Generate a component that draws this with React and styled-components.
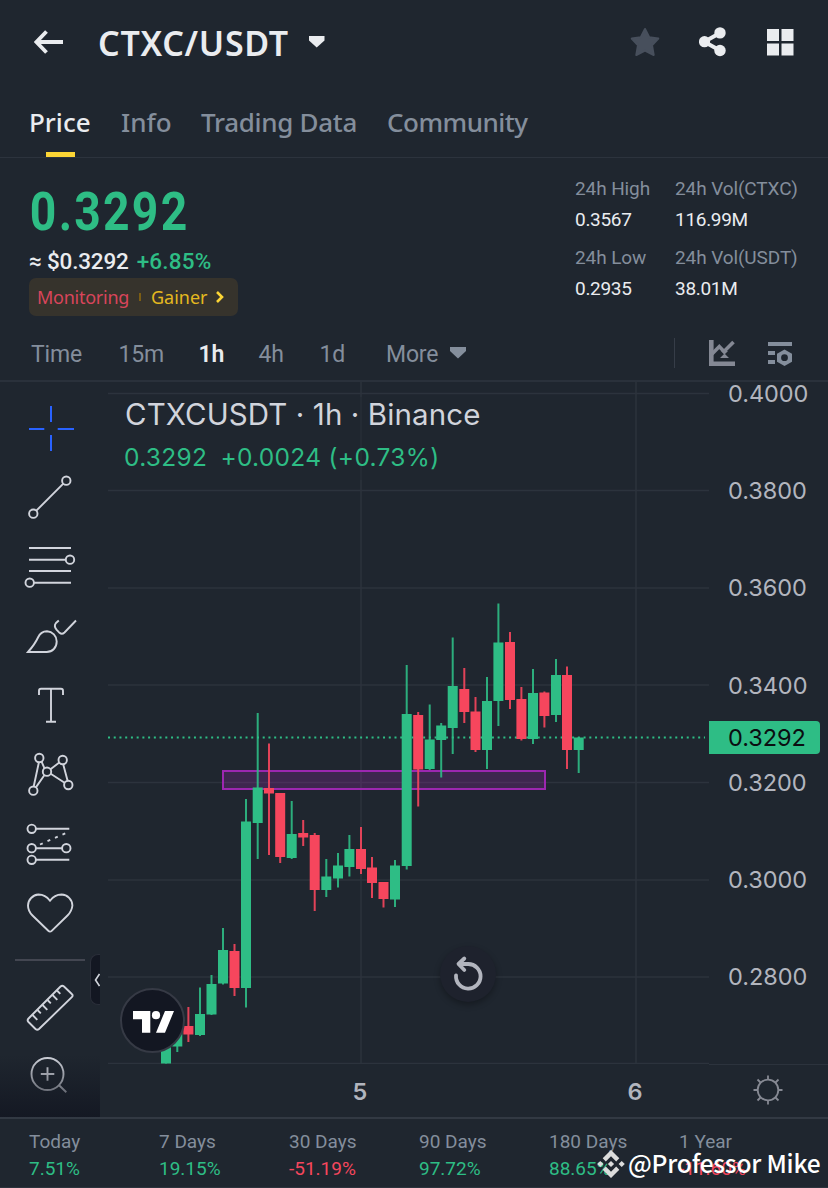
import React from 'react';
import styled, { createGlobalStyle } from 'styled-components';

const GREEN = '#2ebd85';
const RED = '#f6465d';

const GlobalStyle = createGlobalStyle`
  * { box-sizing: border-box; }
  body {
    margin: 0;
    background: #1f262f;
    color: #eaecef;
    font-family: Roboto, "Noto Sans", sans-serif;
  }
  svg { display: block; flex: none; }
`;

const Page = styled.div`
  position: relative;
  width: 828px;
  height: 1188px;
  overflow: hidden;
  display: flex;
  flex-direction: column;
  background: #1f262f;
  white-space: nowrap;
`;

/* header */
const Header = styled.header`
  height: 86px;
  padding: 0 34px 2px;
  display: flex;
  align-items: center;
`;
const Title = styled.h1`
  margin: 2px 0 0 34px;
  width: 211px;
  font: 600 34px "Noto Sans", sans-serif;
  letter-spacing: ${p => p.$ls || 0}px;
`;
const HeaderActions = styled.div`
  margin-left: auto;
  display: flex;
  align-items: center;
  gap: 38.5px;
`;

/* tabs */
const Tabs = styled.nav`
  height: 72px;
  padding-left: 29px;
  display: flex;
  border-bottom: 1px solid #2c333d;
`;
const Tab = styled.div`
  width: ${p => p.$w}px;
  padding-top: 18px;
  display: flex;
  flex-direction: column;
  font: 500 26px/36px "Noto Sans", sans-serif;
  letter-spacing: ${p => p.$ls}px;
  color: ${p => (p.$active ? '#eaecef' : '#848e9c')};
`;
const TabLine = styled.div`
  width: 29px;
  height: 5px;
  margin: 12px 0 0 16.5px;
  background: #fcd535;
`;

/* price block */
const Ticker = styled.section`
  height: 168px;
  padding: 0 0 0 29px;
  display: flex;
`;
const TickerLeft = styled.div`
  width: 546px;
  padding-top: 24px;
`;
const Price = styled.div`
  height: 62px;
  padding-left: 1px;
  font-size: 54.5px;
  line-height: 59px;
  font-weight: 700;
  letter-spacing: 2.6px;
  transform: scaleX(0.85);
  transform-origin: 0 50%;
  color: ${GREEN};
`;
const PriceSub = styled.div`
  height: 34px;
  display: flex;
  align-items: center;
  gap: 8px;
  font-size: 22.5px;
  font-weight: 500;
  letter-spacing: -0.2px;
`;
const Change = styled.span`
  color: ${p => (p.$down ? RED : GREEN)};
  letter-spacing: ${p => p.$ls || 0}px;
`;
const Badge = styled.div`
  width: 209px;
  height: 38px;
  padding-left: 8px;
  border-radius: 7px;
  display: flex;
  align-items: center;
  background: #36332c;
  font: 400 18px "Noto Sans", sans-serif;
`;
const BadgeText = styled.span`
  width: ${p => p.$w}px;
  color: ${p => p.$color};
  letter-spacing: ${p => p.$ls}px;
`;
const BadgeBar = styled.i`
  width: 2px;
  height: 8px;
  margin-right: 10px;
  background: #7b5d14;
`;
const Stats = styled.div`
  padding-top: 16px;
  display: grid;
  grid-template-columns: 100px 130px;
  grid-template-rows: 69px 69px;
`;
const StatLabel = styled.div`
  height: 31px;
  line-height: 30px;
  font-size: 19px;
  color: #848e9c;
  letter-spacing: -0.1px;
`;
const StatValue = styled.div`
  line-height: 30px;
  font-size: 19px;
  letter-spacing: -0.3px;
`;

/* interval bar */
const Intervals = styled.div`
  height: 56px;
  padding-left: 31px;
  display: flex;
  align-items: center;
  border-bottom: 2px solid #2a313b;
  font-size: 23px;
  color: #848e9c;
`;
const Interval = styled.span`
  width: ${p => p.$w}px;
  padding-top: 2px;
  letter-spacing: -0.2px;
  font-weight: ${p => (p.$active ? 600 : 400)};
  color: ${p => (p.$active ? '#eaecef' : 'inherit')};
`;
const Separator = styled.i`
  width: 1px;
  height: 30px;
  margin: 0 34px 0 208px;
  background: #363d48;
`;
const Spacer = styled.i`
  width: 32px;
`;

/* chart */
const ChartRow = styled.main`
  height: 735px;
  display: flex;
`;
const Sidebar = styled.aside`
  position: relative;
  width: 100px;
  padding-top: 11px;
  display: flex;
  flex-direction: column;
  align-items: center;
  color: #d1d4dc;
`;
const Tool = styled.div`
  height: ${p => p.$h || 69.25}px;
  display: flex;
  align-items: center;
  color: ${p => (p.$active ? '#2962ff' : 'inherit')};
`;
const ToolRule = styled.i`
  width: 70px;
  height: 2px;
  margin: 12px 0 11px;
  background: #434651;
`;
const Fade = styled.div`
  position: absolute;
  left: 0;
  bottom: 0;
  width: 100px;
  height: 62px;
  background: linear-gradient(rgba(19, 23, 34, 0), rgba(19, 23, 34, 0.9));
`;
const Collapse = styled.div`
  position: absolute;
  right: 0;
  top: 572px;
  width: 10px;
  height: 51px;
  border: 1px solid #2a2e39;
  border-right: 0;
  border-radius: 8px 0 0 8px;
  display: flex;
  align-items: center;
  justify-content: flex-end;
  background: #131722;
`;
const Main = styled.div`
  position: relative;
  width: 609px;
  padding-left: 8px;
`;
const Legend = styled.div`
  position: absolute;
  left: 24px;
  top: 13px;
  font-family: Inter, sans-serif;
`;
const Symbol = styled.div`
  padding-left: 1px;
  font-size: 29.5px;
  line-height: 38px;
  color: #d1d4dc;
  letter-spacing: 0.1px;
`;
const Quote = styled.div`
  margin-top: 4px;
  display: flex;
  gap: 13px;
  font-size: 24.5px;
  line-height: 40px;
  letter-spacing: ${p => p.$ls}px;
  color: ${GREEN};
`;
const TvBadge = styled.div`
  position: absolute;
  left: 20px;
  top: 606px;
  width: 65px;
  height: 65px;
  border: 2px solid #363a45;
  border-radius: 50%;
  display: flex;
  align-items: center;
  justify-content: center;
  padding: 2px 0 0 2px;
  background: #131722;
`;
const Reset = styled.div`
  position: absolute;
  left: 340px;
  top: 564px;
  width: 56px;
  height: 56px;
  border-radius: 50%;
  display: flex;
  align-items: center;
  justify-content: center;
  background: #1e222d;
  box-shadow: 0 3px 6px rgba(0, 0, 0, 0.3);
`;
const TimeAxis = styled.div`
  height: 53px;
  padding: 2px 0 0 223px;
  display: flex;
  align-items: center;
  font: 600 23.5px Inter, sans-serif;
  color: #b2b5be;
`;
const TimeTick = styled.span`
  flex: none;
  width: 58px;
  margin-right: 217px;
  text-align: center;
`;
const PriceAxis = styled.div`
  width: 119px;
  display: flex;
  flex-direction: column;
  font: 400 23.5px Inter, sans-serif;
  letter-spacing: -0.05px;
  color: #b2b5be;
`;
const PriceTick = styled.div`
  height: 24px;
  margin-bottom: ${p => p.$gap ?? 73.25}px;
  padding-left: 19px;
  line-height: 24px;
`;
const LastPrice = styled.div`
  width: 111px;
  height: 33px;
  margin-bottom: 16.5px;
  padding-left: 19px;
  border-radius: 0 4px 4px 0;
  line-height: 33px;
  background: ${GREEN};
  color: #0b0e11;
`;
const AxisCorner = styled.div`
  height: 53px;
  margin-top: auto;
  padding: 0 2px 2px 0;
  border-top: 1px solid #2c333d;
  display: flex;
  align-items: center;
  justify-content: center;
`;

/* footer */
const Footer = styled.footer`
  height: 71px;
  padding: 9px 0 0 29px;
  display: flex;
  border-top: 2px solid #323943;
  border-bottom: 1px solid #2c333d;
`;
const Period = styled.div`
  width: 130px;
  font-size: 19px;
  line-height: 27px;
  color: #848e9c;
`;
const Watermark = styled.div`
  position: absolute;
  left: 597px;
  top: 1145px;
  height: 38px;
  display: flex;
  align-items: center;
  gap: 3px;
  font: 500 24.5px/34px "Noto Sans CJK SC", "Noto Sans", sans-serif;
  letter-spacing: -0.2px;
  color: #fff;

  span {
    margin-top: -2px;
  }
`;

// colour, centre x, high, open/close top, open/close bottom, low
const candles = [
  [1, 166, 1040, 1040, 1063.5, 1063.5],
  [1, 177.3, 1020, 1024, 1046.5, 1052],
  [0, 188.4, 1007, 1026, 1034.5, 1042],
  [1, 200, 987.5, 1014, 1035, 1036],
  [1, 211.5, 975, 984, 1014.5, 1015],
  [1, 223, 928, 950, 983.5, 984.5],
  [0, 234.5, 944, 951, 988, 996],
  [1, 246, 799, 821.5, 988, 1007.5],
  [1, 257.7, 713, 787.5, 823, 859],
  [0, 269, 743.5, 788, 793.5, 855],
  [0, 280.2, 793, 793, 857, 863],
  [1, 291.7, 801, 834, 858, 859],
  [0, 303.2, 820, 833, 837.5, 846],
  [0, 314.7, 833, 835, 890, 911],
  [1, 326.3, 859, 876.5, 890, 897],
  [1, 338, 853, 865.5, 878.5, 887.5],
  [1, 349.4, 835, 849, 867, 876.5],
  [0, 361, 827, 849, 869, 874],
  [0, 372, 857, 867.5, 883, 898],
  [0, 383.5, 882, 882, 899, 907.5],
  [1, 395, 860, 865.5, 899.5, 907],
  [1, 406.7, 665, 714, 866, 869.5],
  [0, 418.2, 712, 715, 769.5, 806.5],
  [1, 429.7, 704.5, 739.5, 769, 770],
  [1, 441.2, 723, 725.5, 740, 777.5],
  [1, 452.7, 637.5, 686, 728, 754],
  [0, 464.3, 668, 689, 712, 723],
  [0, 475.5, 697, 711.5, 750, 752],
  [1, 487, 677, 701, 750, 769],
  [1, 498.4, 603.5, 642.5, 701, 726],
  [0, 510, 632, 642, 700, 709],
  [0, 521.4, 687, 699, 739, 740.5],
  [1, 533, 669, 693, 739, 744],
  [0, 544.4, 691.5, 692.5, 716, 727.5],
  [1, 556, 659, 675, 715, 722],
  [0, 567, 666.5, 675, 750, 769],
  [1, 578.7, 737, 737.5, 750, 773],
];

const gridY = [393.5, 490.5, 588, 685, 782.5, 880, 977];

const Candles = () => (
  <svg width="601" height="682" viewBox="108 382 601 682">
    <g stroke="#2c333d" strokeWidth="1.5">
      {gridY.map(y => <path key={y} d={`M108 ${y}H709`} />)}
      <path d="M108 1063.5H709M361 382V397M361 480V1064M636 382V1064" />
      <path d="M361 397V480" opacity="0.6" />
    </g>
    <path d="M108 737.5H705" stroke={GREEN} strokeWidth="2" strokeDasharray="2 3.73" />
    <rect x="223" y="771" width="322" height="18" fill="#9c27b0" fillOpacity="0.25" stroke="#9c27b0" strokeWidth="2" />
    {candles.map(([up, x, high, top, bottom, low]) => (
      <g key={x} fill={up ? GREEN : RED}>
        <rect x={x - 1} y={high} width="2" height={low - high} opacity="0.9" />
        <rect x={x - 5} y={top} width="10" height={bottom - top} />
      </g>
    ))}
  </svg>
);

const ToolIcon = ({ children }) => (
  <svg width="60" height="60" viewBox="0 0 60 60" fill="none" stroke="currentColor" strokeWidth="1.9">
    {children}
  </svg>
);

const tools = [
  <path d="M31 8v16M31 37v16M9 31h15.300M37.700 31h16.300" strokeWidth="2" />,
  <>
    <circle cx="13.300" cy="46.700" r="4.200" />
    <circle cx="46.300" cy="13.700" r="4.200" />
    <path d="M16.300 43.700L43.300 16.700" />
  </>,
  <g transform="translate(0 1)">
    <path d="M9 11h42M9 22.700h36.800M9 34h42M14 45.700h37" />
    <circle cx="50" cy="22.700" r="4.200" />
    <circle cx="9.700" cy="45.700" r="4.200" />
  </g>,
  <g transform="translate(0 1)">
    <path d="M8 46C12 41.500 15.500 37 18 31.500C20 27 23 25.300 27 25.300A10.200 10.200 0 0 1 36.700 35.500C36.700 41.500 32.500 46 26.700 46Z" />
    <path d="M56 14.500L44.500 26.500Q42 28.800 39.500 26.800L36.500 23.700Q33.500 20 36 17L38.800 14.500" />
  </g>,
  <path d="M19 20v-4.300q0-2 2-2h20q2 0 2 2V20M31 13.700v33M26 46.700h10" />,
  <g transform="translate(0 1)">
    <path d="M18.900 17.200L13.700 41.500M21.500 16.500L24.500 23.300M30.500 24.200L39.300 17.500M43.200 19.200L47.600 35.800M30.700 28.800L44.600 37.700M24.500 30L15.900 42.400" />
    <circle cx="19.300" cy="13" r="4.200" />
    <circle cx="42.700" cy="15" r="4.200" />
    <circle cx="27" cy="26.700" r="4.200" />
    <circle cx="13.300" cy="45.700" r="4.200" />
    <circle cx="48.300" cy="40" r="4.200" />
  </g>,
  <g transform="translate(0 0.5)">
    <circle cx="11.700" cy="15.300" r="4.200" />
    <circle cx="11.700" cy="34.700" r="4.200" />
    <circle cx="46.300" cy="34.700" r="4.200" />
    <circle cx="11.700" cy="46.300" r="4.200" />
    <path d="M16 15.300h33.300M16 34.700h26M16 46.300h33.300" />
    <path d="M20 31L49.300 18" strokeDasharray="3 5.200" />
  </g>,
  <path d="M30 18.700C26.500 14 22.500 12.500 18.500 12.500A11.300 11.300 0 0 0 8 23.500C8 28 10 31 12.500 33.500L28.300 48.800Q30 50.500 31.700 48.800L47.500 33.500C50 31 52 28 52.400 23.500A11.300 11.300 0 0 0 41.500 12.500C37.500 12.500 33.500 14 30 18.700Z" />,
];

const App = () => (
  <>
    <GlobalStyle />
    <Page>
      <Header>
        <svg width="30" height="24" viewBox="34 30 30 24" fill="none" stroke="#eaecef" strokeWidth="3.800">
          <path d="M63 42H37M46.500 31.500L36.500 42L46.500 52.500" />
        </svg>
        <Title $ls={0.7}>CTXC/USDT</Title>
        <svg width="16" height="12" viewBox="0 0 16 12"><path d="M0 0h15.500v4.500L7.700 11.500L0 4.500Z" fill="#eaecef" /></svg>
        <HeaderActions>
          <svg width="30" height="30" viewBox="0 0 30 30" fill="#474f5c" stroke="#474f5c" strokeWidth="2" strokeLinejoin="round">
            <path d="M15 2L19.200 10.200L28.300 11.600L22 18.200L23.700 28L15 23.700L6.300 28L8 18.200L1.700 11.600L10.800 10.200Z" />
          </svg>
          <svg width="30" height="30" viewBox="699 28 30 30" fill="#eaecef">
            <path d="M720 34L704.300 42.700L720 51.500" fill="none" stroke="#eaecef" strokeWidth="4" />
            <circle cx="704.500" cy="42.700" r="5.600" />
            <circle cx="720" cy="33.900" r="5.700" />
            <circle cx="720" cy="51.500" r="5.700" />
          </svg>
          <svg width="27" height="27" viewBox="0 0 27 27" fill="#eaecef">
            <path d="M0 0h12v12H0zM14.500 0h12v12h-12zM0 14.500h12v12H0zM14.500 14.500h12v12h-12z" />
          </svg>
        </HeaderActions>
      </Header>

      <Tabs>
        <Tab $w={92} $ls={0} $active>Price<TabLine /></Tab>
        <Tab $w={80} $ls={0}>Info</Tab>
        <Tab $w={186} $ls={-0.3}>Trading Data</Tab>
        <Tab $w={160} $ls={-0.5}>Community</Tab>
      </Tabs>

      <Ticker>
        <TickerLeft>
          <Price>0.3292</Price>
          <PriceSub><span>≈ $0.3292</span><Change $ls={0.2}>+6.85%</Change></PriceSub>
          <Badge>
            <BadgeText $w={102} $ls={-0.25} $color="#d9455b">Monitoring</BadgeText>
            <BadgeBar />
            <BadgeText $w={65} $ls={0} $color="#e5b91f">Gainer</BadgeText>
            <svg width="8" height="12" viewBox="0 0 8 12" fill="none" stroke="#fcd535" strokeWidth="2.600"><path d="M1 1L6 6L1 11" /></svg>
          </Badge>
        </TickerLeft>
        <Stats>
          <div><StatLabel>24h High</StatLabel><StatValue>0.3567</StatValue></div>
          <div><StatLabel>24h Vol(CTXC)</StatLabel><StatValue>116.99M</StatValue></div>
          <div><StatLabel>24h Low</StatLabel><StatValue>0.2935</StatValue></div>
          <div><StatLabel>24h Vol(USDT)</StatLabel><StatValue>38.01M</StatValue></div>
        </Stats>
      </Ticker>

      <Intervals>
        <Interval $w={87.5}>Time</Interval>
        <Interval $w={80}>15m</Interval>
        <Interval $w={60} $active>1h</Interval>
        <Interval $w={61}>4h</Interval>
        <Interval $w={66.5}>1d</Interval>
        <Interval $w={64}>More</Interval>
        <svg width="16" height="12" viewBox="0 0 16 12"><path d="M0 0h16v4L8 11.500L0 4Z" fill="#848e9c" /></svg>
        <Separator />
        <svg width="27" height="27" viewBox="0 0 27 27" fill="none" stroke="#848894">
          <path d="M2.300 0V23.800H26" strokeWidth="4.600" />
          <path d="M3 14L10.300 6.500L15 11.500L24.500 2" strokeWidth="3.600" />
          <path d="M11 18l4.500-4.500 4.500 4.500zM12 11h7l-3.500 3.500z" fill="#848894" stroke="none" />
        </svg>
        <Spacer />
        <svg width="25" height="25" viewBox="0 0 25 25" fill="#848e9c">
          <path d="M0 1h24v4H0zM0 10h7v4H0zM0 19h7v4H0z" />
          <path fillRule="evenodd" d="M16.500 8.500L24 12.700V20.700L16.500 25L9 20.700V12.700ZM16.500 13.300A3.400 3.400 0 1 0 16.500 20.100A3.400 3.400 0 1 0 16.500 13.300Z" />
        </svg>
      </Intervals>

      <ChartRow>
        <Sidebar>
          {tools.map((icon, i) => (
            <Tool key={i} $active={i === 0}><ToolIcon>{icon}</ToolIcon></Tool>
          ))}
          <ToolRule />
          <Tool $h={70}>
            <ToolIcon>
              <path d="M40.500 9.500Q42.300 8 44 9.500L51.800 17Q53.500 18.500 51.800 20.200L19 52Q17.300 53.500 15.500 52L8.500 45Q6.800 43.200 8.500 41.500Z" />
              <path d="M12.500 38l4.800 4.800M17.500 33l3.300 3.300M22.500 28l4.800 4.800M27.500 23l3.300 3.300M32.500 18l4.800 4.800M37 13.500l3.300 3.300" />
            </ToolIcon>
          </Tool>
          <Tool $h={67}>
            <ToolIcon>
              <circle cx="27.500" cy="28" r="16" />
              <path d="M20.800 28h13.500M27.500 21.300v13.500M38.800 39l7.500 7.300" />
            </ToolIcon>
          </Tool>
          <Fade />
          <Collapse>
            <svg width="6" height="14" viewBox="0 0 6 14" fill="none" stroke="#d1d4dc" strokeWidth="1.600"><path d="M5.500 1L1.500 7L5.500 13" /></svg>
          </Collapse>
        </Sidebar>

        <Main>
          <Candles />
          <TimeAxis><TimeTick>5</TimeTick><TimeTick>6</TimeTick></TimeAxis>
          <Legend>
            <Symbol>CTXCUSDT · 1h · Binance</Symbol>
            <Quote $ls={0.32}><span>0.3292</span><span>+0.0024 (+0.73%)</span></Quote>
          </Legend>
          <TvBadge>
            <svg width="42" height="22" viewBox="133 1011 42 22" fill="#fff">
              <path d="M133 1011h17.300v21.700h-8.300v-13.500h-9zM165 1011h9l-9 21.700h-9z" />
              <circle cx="156" cy="1015.200" r="4.100" />
            </svg>
          </TvBadge>
          <Reset>
            <svg width="34" height="38" viewBox="451 956 34 38" fill="none" stroke="#b2b5be" strokeWidth="3.800" strokeLinecap="round" strokeLinejoin="round">
              <path d="M456 976.500A12.300 12.300 0 1 0 468 965H460M464.300 959.500L458.500 965L464.300 971" />
            </svg>
          </Reset>
        </Main>

        <PriceAxis>
          <PriceTick $gap={73}>0.4000</PriceTick>
          <PriceTick>0.3800</PriceTick>
          <PriceTick>0.3600</PriceTick>
          <PriceTick $gap={23.5}>0.3400</PriceTick>
          <LastPrice>0.3292</LastPrice>
          <PriceTick>0.3200</PriceTick>
          <PriceTick>0.3000</PriceTick>
          <PriceTick $gap={0}>0.2800</PriceTick>
          <AxisCorner>
            <svg width="30" height="30" viewBox="-15 -15 30 30" fill="none" stroke="#868993" strokeWidth="1.800">
              <circle r="10.300" />
              <path d="M0-10.500V-14.500M0 10.500V14.500M-10.500 0H-14.500M10.500 0H14.500M-7.500-7.500L-10.500-10.500M7.500-7.500L10.500-10.500M-7.500 7.500L-10.500 10.500M7.500 7.500L10.500 10.500" />
            </svg>
          </AxisCorner>
        </PriceAxis>
      </ChartRow>

      <Footer>
        <Period><div>Today</div><Change>7.51%</Change></Period>
        <Period><div>7 Days</div><Change>19.15%</Change></Period>
        <Period><div>30 Days</div><Change $down>-51.19%</Change></Period>
        <Period><div>90 Days</div><Change>97.72%</Change></Period>
        <Period><div>180 Days</div><Change>88.65%</Change></Period>
        <Period><div>1 Year</div><Change $down>-11.60%</Change></Period>
      </Footer>

      <Watermark>
        <svg width="28" height="28" viewBox="-14 -14 28 28" fill="#dcdcdc">
          <path d="M0-14L8.300-5.700L5.200-2.600L0-7.800L-5.200-2.600L-8.300-5.700ZM0 14L8.300 5.700L5.200 2.600L0 7.800L-5.200 2.600L-8.300 5.700ZM-10.700-3.100L-7.600 0L-10.700 3.100L-13.800 0ZM10.700-3.100L13.800 0L10.700 3.100L7.600 0ZM0-3.100L3.100 0L0 3.100L-3.100 0Z" />
        </svg>
        <span>@Professor Mike</span>
      </Watermark>
    </Page>
  </>
);

export default App;
